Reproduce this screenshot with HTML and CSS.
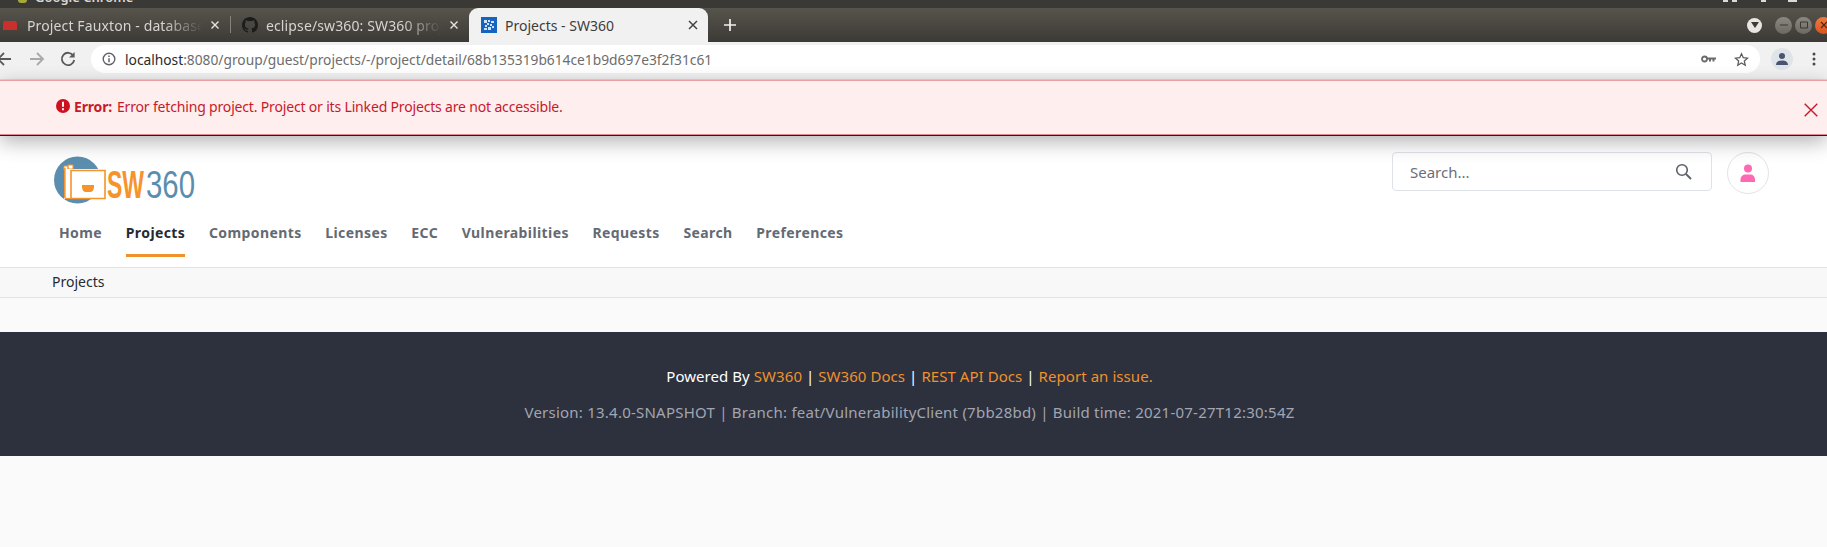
FILE: index.html
```html
<!DOCTYPE html>
<html lang="en">
<head>
<meta charset="utf-8">
<title>Projects - SW360</title>
<link rel="stylesheet" href="styles.css">
</head>
<body>
<div class="titlebar">
  <span class="os-dot"></span><span class="os-title">Google Chrome</span>
  <span class="os-tray"><i class="tray-a"></i><i class="tray-a"></i><i class="tray-b"></i><i class="tray-c"></i></span>
</div>
<div class="tabstrip">
  <div class="tab tab-first">
    <svg class="fav" width="16" height="16" viewBox="0 0 16 16"><path fill="#c9302c" d="M2 4h12l1 3v6H1V7z"/></svg>
    <span class="tab-label fade">Project Fauxton - database</span>
    <svg class="tab-x" width="10" height="10" viewBox="0 0 10 10"><path d="M1.5 1.5l7 7M8.5 1.5l-7 7" stroke="#e6e4e0" stroke-width="1.4"/></svg>
  </div>
  <div class="tab tab-second">
    <svg class="fav" width="16" height="16" viewBox="0 0 16 16"><path fill="#1d1c1a" d="M8 0C3.58 0 0 3.58 0 8c0 3.54 2.29 6.53 5.47 7.59.4.07.55-.17.55-.38v-1.34c-2.23.48-2.7-1.07-2.7-1.07-.36-.92-.89-1.17-.89-1.17-.73-.5.05-.49.05-.49.8.06 1.23.82 1.23.82.72 1.22 1.87.87 2.33.67.07-.52.28-.87.5-1.07-1.78-.2-3.64-.89-3.64-3.95 0-.87.31-1.59.82-2.15-.08-.2-.36-1.02.08-2.12 0 0 .67-.21 2.2.82a7.6 7.6 0 0 1 4 0c1.53-1.04 2.2-.82 2.2-.82.44 1.1.16 1.92.08 2.12.51.56.82 1.27.82 2.15 0 3.07-1.87 3.75-3.65 3.95.29.25.54.73.54 1.48v2.2c0 .21.15.46.55.38A8 8 0 0 0 16 8c0-4.42-3.58-8-8-8z"/></svg>
    <span class="tab-label fade">eclipse/sw360: SW360 project</span>
    <svg class="tab-x" width="10" height="10" viewBox="0 0 10 10"><path d="M1.5 1.5l7 7M8.5 1.5l-7 7" stroke="#e6e4e0" stroke-width="1.4"/></svg>
  </div>
  <div class="tab tab-active">
    <svg class="fav" width="16" height="16" viewBox="0 0 16 16"><rect width="16" height="16" fill="#1565c0"/><path fill="#cfe2f7" d="M3 3h3v3H3zM7 3h2v2H7zM10 4h3v2h-3zM6 6h2v2H6zM9 7h2v2H9zM4 8h2v2H4zM11 9h2v2h-2zM7 10h3v3H7zM3 11h3v2H3z"/></svg>
    <span class="tab-label">Projects - SW360</span>
    <svg class="tab-x" width="10" height="10" viewBox="0 0 10 10"><path d="M1 1l8 8M9 1l-8 8" stroke="#45433f" stroke-width="1.5"/></svg>
  </div>
  <svg class="newtab" width="14" height="14" viewBox="0 0 14 14"><path d="M7 1v12M1 7h12" stroke="#f1f0ee" stroke-width="1.7"/></svg>
  <div class="window-controls">
    <span class="tab-search"><svg width="8" height="6" viewBox="0 0 8 6"><path fill="#3c3a36" d="M0 0h8L4 6z"/></svg></span>
    <span class="wc wc-grey"><svg width="10" height="10" viewBox="0 0 10 10"><path d="M1 5h8" stroke="#3a3834" stroke-width="1"/></svg></span>
    <span class="wc wc-grey"><svg width="10" height="10" viewBox="0 0 10 10"><path d="M1.5 2h7v6h-7z" fill="none" stroke="#3a3834" stroke-width="1"/></svg></span>
    <span class="wc wc-close"><svg width="10" height="10" viewBox="0 0 10 10"><path d="M2 2l6 6M8 2l-6 6" stroke="#4a2a18" stroke-width="1.2"/></svg></span>
  </div>
</div>
<div class="toolbar">
  <svg class="tb-back" width="16" height="16" viewBox="0 0 16 16"><path d="M15 8H2M8 2L2 8l6 6" fill="none" stroke="#5a5a5a" stroke-width="1.8"/></svg>
  <svg class="tb-fwd" width="16" height="16" viewBox="0 0 16 16"><path d="M1 8h13M8 2l6 6-6 6" fill="none" stroke="#a9a9a9" stroke-width="1.8"/></svg>
  <svg class="tb-reload" width="16" height="16" viewBox="0 0 16 16"><path d="M13.3 4.6A6.2 6.2 0 1 0 14.2 9" fill="none" stroke="#5a5a5a" stroke-width="1.8"/><path fill="#5a5a5a" d="M14.6 1v5.6H9z"/></svg>
  <div class="omnibox">
    <svg class="omni-info" width="14" height="14" viewBox="0 0 14 14"><circle cx="7" cy="7" r="5.8" fill="none" stroke="#5f6368" stroke-width="1.4"/><path d="M7 6.2v4M7 3.6v1.5" stroke="#5f6368" stroke-width="1.5"/></svg>
    <span class="url"><span class="url-host">localhost</span>:8080/group/guest/projects/-/project/detail/68b135319b614ce1b9d697e3f2f31c61</span>
    <svg class="omni-key" width="15" height="8" viewBox="0 0 15 8"><circle cx="3.5" cy="4" r="2.5" fill="none" stroke="#6a6a6a" stroke-width="1.8"/><path d="M6 2.5h9v2h-1.5v2h-2v-2H10v2H8v-2H6z" fill="#6a6a6a"/></svg>
    <svg class="omni-star" width="15" height="15" viewBox="0 0 24 24"><path d="M12 2.8l2.8 6.3 6.9.7-5.2 4.6 1.500 6.800-6-3.500-6 3.500 1.500-6.800-5.200-4.600 6.900-.7z" fill="none" stroke="#5a5a5a" stroke-width="2"/></svg>
  </div>
  <span class="profile"><svg width="14" height="14" viewBox="0 0 14 14"><circle cx="7" cy="4" r="3" fill="#47566e"/><path d="M1 13c0-3.2 2.8-4.6 6-4.6s6 1.400 6 4.600z" fill="#47566e"/></svg></span>
  <svg class="menu" width="4" height="14" viewBox="0 0 4 14"><circle cx="2" cy="2" r="1.500" fill="#4a4a4a"/><circle cx="2" cy="7" r="1.500" fill="#4a4a4a"/><circle cx="2" cy="12" r="1.500" fill="#4a4a4a"/></svg>
</div>
<div class="page">
  <div class="alert">
    <div class="alert-text">
      <svg class="alert-icon" width="14" height="14" viewBox="0 0 14 14"><circle cx="7" cy="7" r="7" fill="#cc1120"/><path d="M7 2.800v5M7 9.300v2" stroke="#fff" stroke-width="1.900"/></svg>
      <b>Error:</b>
      <span>Error fetching project. Project or its Linked Projects are not accessible.</span>
    </div>
    <svg class="alert-close" width="14" height="14" viewBox="0 0 14 14"><path d="M.7.7l12.600 12.600M13.300.7L.7 13.300" stroke="#c8192b" stroke-width="1.400"/></svg>
  </div>
  <header class="site-header">
    <div class="header-top">
      <svg class="logo" width="144" height="50" viewBox="0 0 144 50">
        <circle cx="23.500" cy="26" r="23.500" fill="#5b8eae"/>
        <path d="M10 12h4v4h-4zM14 11h5v4h-5z" fill="#fff" stroke="#f6932a"/>
        <path d="M10 15h41v30H10z" fill="#fff"/>
        <path d="M10.800 14v30M17 16.500h34v28H17z" fill="none" stroke="#f6932a" stroke-width="1.600"/>
        <path d="M10.800 44.500H17" fill="none" stroke="#f6932a" stroke-width="1.200"/>
        <path d="M28 31h12v2c0 3-1.500 5-4 5h-4c-2.500 0-4-2-4-5z" fill="#f6932a"/>
        <text class="logo-sw" transform="translate(53 44) scale(.605 1)">SW</text>
        <text class="logo-360" transform="translate(92 44) scale(.773 1)">360</text>
      </svg>
      <div class="header-tools">
        <div class="search-box">
          <span class="search-ph">Search...</span>
          <svg width="17" height="17" viewBox="0 0 17 17"><circle cx="7" cy="7" r="5.300" fill="none" stroke="#5a5f68" stroke-width="1.600"/><path d="M11 11l5 5" stroke="#5a5f68" stroke-width="1.800"/></svg>
        </div>
        <span class="avatar"><svg width="16" height="18" viewBox="0 0 16 18"><circle cx="8" cy="4.500" r="4" fill="#ff69b4"/><path d="M0.500 18v-2.500c0-3 2.500-5 5-5h5c2.500 0 4.500 2 4.500 5V18z" fill="#ff69b4"/></svg></span>
      </div>
    </div>
    <nav class="nav">
      <a class="nav-link">Home</a>
      <a class="nav-link is-active">Projects</a>
      <a class="nav-link">Components</a>
      <a class="nav-link">Licenses</a>
      <a class="nav-link">ECC</a>
      <a class="nav-link">Vulnerabilities</a>
      <a class="nav-link">Requests</a>
      <a class="nav-link">Search</a>
      <a class="nav-link">Preferences</a>
    </nav>
  </header>
  <div class="breadcrumb">Projects</div>
  <main class="content"></main>
  <footer class="footer">
    <p class="footer-links">Powered By <a>SW360</a> | <a>SW360 Docs</a> | <a>REST API Docs</a> | <a>Report an issue.</a></p>
    <p class="footer-meta">Version: 13.4.0-SNAPSHOT | Branch: feat/VulnerabilityClient (7bb28bd) | Build time: 2021-07-27T12:30:54Z</p>
  </footer>
</div>
</body>
</html>
```
FILE: styles.css
```css
* { box-sizing: border-box; }
html, body { margin: 0; padding: 0; }
body {
  height: 547px;
  overflow: hidden;
  background: #fafafa;
  font-family: "Noto Sans", sans-serif;
  color: #262a33;
}
svg { display: block; flex: none; }

.titlebar {
  height: 8px;
  background: #3b3935;
  overflow: hidden;
  display: flex;
  align-items: flex-start;
  padding-left: 18px;
}
.os-dot { width: 9px; height: 3px; margin-right: 8px; background: #a8a83a; border-radius: 0 0 5px 5px; }
.os-title { font-size: 13px; line-height: 13px; color: #d9d7d2; margin-top: -9px; font-weight: 600; }
.os-tray { margin-left: auto; margin-right: 30px; display: flex; gap: 4px; }
.os-tray i { display: block; height: 2px; background: #dcdad6; }
.tray-a { width: 5px; }
.tray-b { width: 5px; margin-left: 20px; }
.tray-c { width: 9px; margin-left: 18px; }

.tabstrip {
  height: 34px;
  background: linear-gradient(#57544c, #3c3a36);
  display: flex;
  align-items: stretch;
}
.tab {
  display: flex;
  align-items: center;
  flex: none;
  font-size: 14px;
  color: #d6d4d0;
}
.tab-first { width: 230px; }
.tab-first .fav { margin-left: 2px; margin-right: 9px; }
.tab-second { width: 239px; padding-left: 12px; position: relative; }
.tab-second::before {
  content: "";
  position: absolute;
  left: 0;
  top: 8px;
  height: 17px;
  width: 1px;
  background: #85827b;
}
.tab-second .fav { margin-right: 8px; }
.tab-active {
  width: 239px;
  padding: 0 10px 0 12px;
  background: #f1f1f1;
  border-radius: 9px 9px 0 0;
  color: #3d3d3d;
}
.tab-active .fav { margin-right: 8px; }
.tab-label { flex: 1; min-width: 0; white-space: nowrap; overflow: hidden; }
.fade {
  letter-spacing: .12px;
  -webkit-mask-image: linear-gradient(90deg, #000 76%, transparent 98%);
  mask-image: linear-gradient(90deg, #000 76%, transparent 98%);
}
.tab-first .tab-x,
.tab-second .tab-x { margin: 0 10px 0 4px; }
.newtab { align-self: center; margin-left: 15px; }
.window-controls { margin-left: auto; display: flex; align-items: center; gap: 3px; margin-right: -5px; }
.tab-search {
  width: 15px; height: 15px; border-radius: 50%; background: #e9e6e1;
  display: flex; align-items: center; justify-content: center; margin-right: 10px;
}
.wc { width: 17px; height: 17px; border-radius: 50%; display: flex; align-items: center; justify-content: center; }
.wc-grey { background: linear-gradient(#8a8880, #6b6962); }
.wc-close { background: linear-gradient(#f27a3c, #d9531e); }

.toolbar {
  height: 38px;
  background: #f1f1f1;
  border-bottom: 1px solid #dadada;
  display: flex;
  align-items: center;
  padding-bottom: 3px;
}
.tb-back { margin-left: -4px; }
.tb-fwd { margin-left: 17px; }
.tb-reload { margin-left: 15px; }
.omnibox {
  margin-left: 15px;
  width: 1669px;
  flex: none;
  height: 28px;
  background: #fff;
  border-radius: 14px;
  display: flex;
  align-items: center;
  padding: 0 11px 0 11px;
}
.omni-info { margin-right: 9px; }
.url { flex: 1; font-size: 13.780px; color: #6d6d6d; white-space: nowrap; }
.url-host { color: #2b2b2b; }
.omni-key { margin-right: 18px; }
.profile {
  width: 22px; height: 22px; border-radius: 50%; background: #dfe3ea;
  display: flex; align-items: center; justify-content: center; margin-left: 11px; flex: none;
}
.menu { margin-left: 19px; }

.alert {
  height: 56px;
  background: #feeeee;
  border-top: 1px solid #e9a0a6;
  border-bottom: 1px solid #2a1a20;
  box-shadow: inset 0 -1px 0 #d98a94, 0 6px 20px rgba(0, 0, 0, .3);
  display: flex;
  align-items: center;
  justify-content: space-between;
  padding: 0 9px 4px 56px;
  position: relative;
  font-size: 14px;
  color: #c8192b;
}
.alert-text { display: flex; align-items: center; white-space: nowrap; letter-spacing: -.17px; }
.alert-icon { margin-right: 4px; }
.alert b { font-weight: 700; margin-right: 5px; }
.alert-close { margin-top: 7px; }

.site-header {
  height: 132px;
  background: #fff;
  border-bottom: 1px solid #e3e3e3;
  padding-top: 16px;
}
.header-top {
  display: flex;
  justify-content: space-between;
  padding: 0 58px 0 54px;
  height: 56px;
}
.logo { margin-top: 2px; }
.logo-sw { font-family: "Liberation Sans", sans-serif; font-weight: 700; font-size: 38px; fill: #f6932a; }
.logo-360 { font-family: "Liberation Sans", sans-serif; font-size: 38px; fill: #5b8eae; }
.header-tools { display: flex; align-items: flex-start; gap: 15px; }
.search-box {
  width: 320px; height: 39px;
  border: 1px solid #dfe2e6;
  border-radius: 4px;
  background: #fff;
  display: flex; align-items: center; justify-content: space-between;
  padding: 0 19px 0 17px;
}
.search-ph { font-size: 15px; color: #6b6f78; }
.avatar {
  width: 42px; height: 42px; border: 1px solid #e4e4e8; border-radius: 50%;
  display: flex; align-items: center; justify-content: center;
}
.nav { display: flex; padding-left: 59px; gap: 23.700px; margin-top: 10px; }
.nav-link {
  display: block;
  height: 39px;
  padding-top: 5px;
  font-size: 14px;
  line-height: 19px;
  font-weight: 700;
  color: #646a73;
  letter-spacing: .4px;
  border-bottom: 3px solid transparent;
}
.nav-link.is-active { color: #262a33; border-bottom-color: #f0922c; }

.breadcrumb {
  height: 30px;
  background: #f8f8f8;
  border-bottom: 1px solid #e3e3e3;
  padding-left: 52px;
  font-size: 14px;
  line-height: 28px;
  color: #262a33;
}
.content { height: 34px; background: #fafafa; }
.footer {
  height: 124px;
  background: #2d303d;
  text-align: center;
  font-size: 15px;
  padding: 34px 8px 0 0;
}
.footer p { margin: 0; line-height: 20px; white-space: nowrap; }
.footer-links { color: #fff; letter-spacing: .06px; }
.footer-links a { color: #f0922c; }
.footer .footer-meta { color: #a2a6b1; margin-top: 16px; letter-spacing: .23px; }
```
